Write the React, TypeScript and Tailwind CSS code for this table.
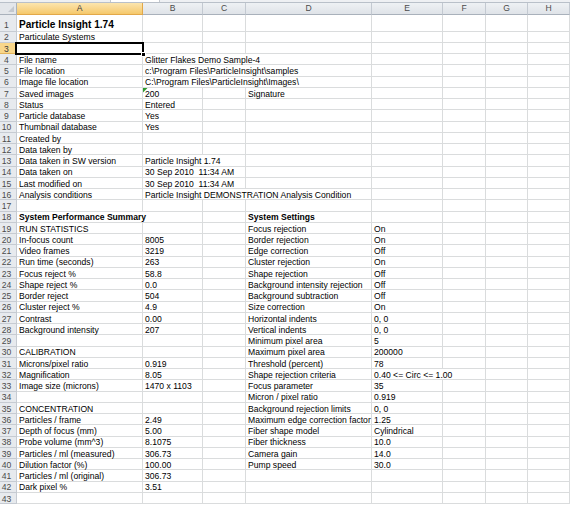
import React from "react";

type Cell = { c: number; t: string; span?: number; bold?: boolean };
type Row = { n: number; cells: Cell[] };

const A = 0, B = 1, C = 2, D = 3, E = 4;

const rows: Row[] = [
  { n: 2, cells: [{ c: A, t: "Particulate Systems" }] },
  { n: 3, cells: [] },
  { n: 4, cells: [{ c: A, t: "File name" }, { c: B, t: "Glitter Flakes Demo Sample-4", span: 3 }] },
  { n: 5, cells: [{ c: A, t: "File location" }, { c: B, t: "c:\\Program Files\\ParticleInsight\\samples", span: 3 }] },
  { n: 6, cells: [{ c: A, t: "Image file location" }, { c: B, t: "C:\\Program Files\\ParticleInsight\\Images\\", span: 3 }] },
  { n: 7, cells: [{ c: A, t: "Saved images" }, { c: B, t: "200" }, { c: D, t: "Signature" }] },
  { n: 8, cells: [{ c: A, t: "Status" }, { c: B, t: "Entered" }] },
  { n: 9, cells: [{ c: A, t: "Particle database" }, { c: B, t: "Yes" }] },
  { n: 10, cells: [{ c: A, t: "Thumbnail database" }, { c: B, t: "Yes" }] },
  { n: 11, cells: [{ c: A, t: "Created by" }] },
  { n: 12, cells: [{ c: A, t: "Data taken by" }] },
  { n: 13, cells: [{ c: A, t: "Data taken in SW version" }, { c: B, t: "Particle Insight 1.74", span: 2 }] },
  { n: 14, cells: [{ c: A, t: "Data taken on" }, { c: B, t: "30 Sep 2010\u00a0\u00a011:34 AM", span: 2 }] },
  { n: 15, cells: [{ c: A, t: "Last modified on" }, { c: B, t: "30 Sep 2010\u00a0\u00a011:34 AM", span: 2 }] },
  { n: 16, cells: [{ c: A, t: "Analysis conditions" }, { c: B, t: "Particle Insight DEMONSTRATION Analysis Condition", span: 3 }] },
  { n: 17, cells: [] },
  { n: 18, cells: [{ c: A, t: "System Performance Summary", span: 2, bold: true }, { c: D, t: "System Settings", bold: true }] },
  { n: 19, cells: [{ c: A, t: "RUN STATISTICS" }, { c: D, t: "Focus rejection" }, { c: E, t: "On" }] },
  { n: 20, cells: [{ c: A, t: "In-focus count" }, { c: B, t: "8005" }, { c: D, t: "Border rejection" }, { c: E, t: "On" }] },
  { n: 21, cells: [{ c: A, t: "Video frames" }, { c: B, t: "3219" }, { c: D, t: "Edge correction" }, { c: E, t: "Off" }] },
  { n: 22, cells: [{ c: A, t: "Run time (seconds)" }, { c: B, t: "263" }, { c: D, t: "Cluster rejection" }, { c: E, t: "On" }] },
  { n: 23, cells: [{ c: A, t: "Focus reject %" }, { c: B, t: "58.8" }, { c: D, t: "Shape rejection" }, { c: E, t: "Off" }] },
  { n: 24, cells: [{ c: A, t: "Shape reject %" }, { c: B, t: "0.0" }, { c: D, t: "Background intensity rejection" }, { c: E, t: "Off" }] },
  { n: 25, cells: [{ c: A, t: "Border reject" }, { c: B, t: "504" }, { c: D, t: "Background subtraction" }, { c: E, t: "Off" }] },
  { n: 26, cells: [{ c: A, t: "Cluster reject %" }, { c: B, t: "4.9" }, { c: D, t: "Size correction" }, { c: E, t: "On" }] },
  { n: 27, cells: [{ c: A, t: "Contrast" }, { c: B, t: "0.00" }, { c: D, t: "Horizontal indents" }, { c: E, t: "0, 0" }] },
  { n: 28, cells: [{ c: A, t: "Background intensity" }, { c: B, t: "207" }, { c: D, t: "Vertical indents" }, { c: E, t: "0, 0" }] },
  { n: 29, cells: [{ c: D, t: "Minimum pixel area" }, { c: E, t: "5" }] },
  { n: 30, cells: [{ c: A, t: "CALIBRATION" }, { c: D, t: "Maximum pixel area" }, { c: E, t: "200000" }] },
  { n: 31, cells: [{ c: A, t: "Microns/pixel ratio" }, { c: B, t: "0.919" }, { c: D, t: "Threshold (percent)" }, { c: E, t: "78" }] },
  { n: 32, cells: [{ c: A, t: "Magnification" }, { c: B, t: "8.05" }, { c: D, t: "Shape rejection criteria" }, { c: E, t: "0.40 <= Circ <= 1.00", span: 2 }] },
  { n: 33, cells: [{ c: A, t: "Image size (microns)" }, { c: B, t: "1470 x 1103" }, { c: D, t: "Focus parameter" }, { c: E, t: "35" }] },
  { n: 34, cells: [{ c: D, t: "Micron / pixel ratio" }, { c: E, t: "0.919" }] },
  { n: 35, cells: [{ c: A, t: "CONCENTRATION" }, { c: D, t: "Background rejection limits" }, { c: E, t: "0, 0" }] },
  { n: 36, cells: [{ c: A, t: "Particles / frame" }, { c: B, t: "2.49" }, { c: D, t: "Maximum edge correction factor" }, { c: E, t: "1.25" }] },
  { n: 37, cells: [{ c: A, t: "Depth of focus (mm)" }, { c: B, t: "5.00" }, { c: D, t: "Fiber shape model" }, { c: E, t: "Cylindrical" }] },
  { n: 38, cells: [{ c: A, t: "Probe volume (mm^3)" }, { c: B, t: "8.1075" }, { c: D, t: "Fiber thickness" }, { c: E, t: "10.0" }] },
  { n: 39, cells: [{ c: A, t: "Particles / ml (measured)" }, { c: B, t: "306.73" }, { c: D, t: "Camera gain" }, { c: E, t: "14.0" }] },
  { n: 40, cells: [{ c: A, t: "Dilution factor (%)" }, { c: B, t: "100.00" }, { c: D, t: "Pump speed" }, { c: E, t: "30.0" }] },
  { n: 41, cells: [{ c: A, t: "Particles / ml (original)" }, { c: B, t: "306.73" }] },
  { n: 42, cells: [{ c: A, t: "Dark pixel %" }, { c: B, t: "3.51" }] },
  { n: 43, cells: [] },
];

const spanClass: Record<number, string> = { 1: "", 2: "col-span-2", 3: "col-span-3" };
const GRID = "grid grid-cols-[17px_126px_60px_43px_126px_71px_43px_42px_1fr]";
const letters = ["A", "B", "C", "D", "E", "F", "G", "H"];

function DataRow({ row }: { row: Row }) {
  const out: React.ReactNode[] = [];
  let col = 0;
  while (col < 8) {
    const cell = row.cells.find((c) => c.c === col);
    const span = cell?.span ?? 1;
    const isSel = row.n === 3 && col === 0;
    const isTri = row.n === 7 && col === 1;
    out.push(
      <div
        key={col}
        className={`${spanClass[span]} relative h-[11.25px] border-r border-b border-[#dadcdd] pl-[2px] pt-[1.75px] leading-[9px] whitespace-nowrap text-black ${cell?.bold ? "font-bold" : ""}`}
      >
        {cell?.t ?? ""}
        {isSel && (
          <>
            <div className="absolute left-[-2px] top-[-1px] right-[-2px] bottom-[-1.5px] border-2 border-black z-10" />
            <div className="absolute right-[-4px] bottom-[-4px] w-[5px] h-[5px] bg-black border border-white z-20" />
          </>
        )}
        {isTri && (
          <svg className="absolute left-0 top-0" width="5" height="5" viewBox="0 0 5 5">
            <polygon points="0,0 4.5,0 0,4.5" fill="#2f9a2f" />
          </svg>
        )}
      </div>
    );
    col += span;
  }
  const sel = row.n === 3;
  return (
    <div className={GRID}>
      <div
        className={`h-[11.25px] border-r border-b text-center pr-[3px] pt-[1.75px] leading-[9px] ${
          sel
            ? "bg-[#f8d68a] border-[#e2b35c] text-[#3b3b3b]"
            : "bg-[#e7eaee] border-[#c6cbd2] text-[#4b4b4b]"
        }`}
      >
        {row.n}
      </div>
      {out}
    </div>
  );
}

export default function App() {
  return (
    <div
      className="w-[570px] h-[505px] overflow-hidden bg-white text-[8.6px]"
      style={{ fontFamily: '"Liberation Sans", Arial, sans-serif' }}
    >
      {/* top strip */}
      <div className="h-[3px] flex bg-[#eef0f3] border-b border-[#b9c0c9]">
        <div className="w-[110px]" />
        <div className="w-[50px] bg-white border-x border-[#c3c8cf]" />
      </div>
      {/* column headers */}
      <div className={GRID}>
        <div className="relative h-[12px] bg-[#e3e6ea] border-r border-b border-[#a9b1bb]">
          <svg className="absolute right-[2px] bottom-[2px]" width="6" height="6" viewBox="0 0 6 6">
            <polygon points="6,0 6,6 0,6" fill="#c3c8cf" />
          </svg>
        </div>
        {letters.map((l, i) => (
          <div
            key={l}
            className={`h-[12px] text-center leading-[11px] border-r border-b ${
              i === 0
                ? "bg-gradient-to-b from-[#fbe5ae] to-[#f5c86a] border-[#e2a849] text-[#3b3b3b]"
                : "bg-gradient-to-b from-[#eef1f4] to-[#dfe3e8] border-[#c3c9d1] border-b-[#a9b1bb] text-[#4b4b4b]"
            }`}
          >
            {l}
          </div>
        ))}
      </div>
      {/* row 1 */}
      <div className={GRID}>
        <div className="h-[16.5px] bg-[#e7eaee] border-r border-b border-[#c6cbd2] text-center pr-[3px] pt-[5px] leading-[11px] text-[#4b4b4b]">
          1
        </div>
        <div className="h-[16.5px] border-r border-b border-[#dadcdd] pl-[2px] pt-[4px] leading-[12px] text-[10.1px] font-bold whitespace-nowrap text-black">
          Particle Insight 1.74
        </div>
        {[1, 2, 3, 4, 5, 6, 7].map((i) => (
          <div key={i} className="h-[16.5px] border-r border-b border-[#dadcdd]" />
        ))}
      </div>
      {rows.map((r) => (
        <DataRow key={r.n} row={r} />
      ))}
    </div>
  );
}
